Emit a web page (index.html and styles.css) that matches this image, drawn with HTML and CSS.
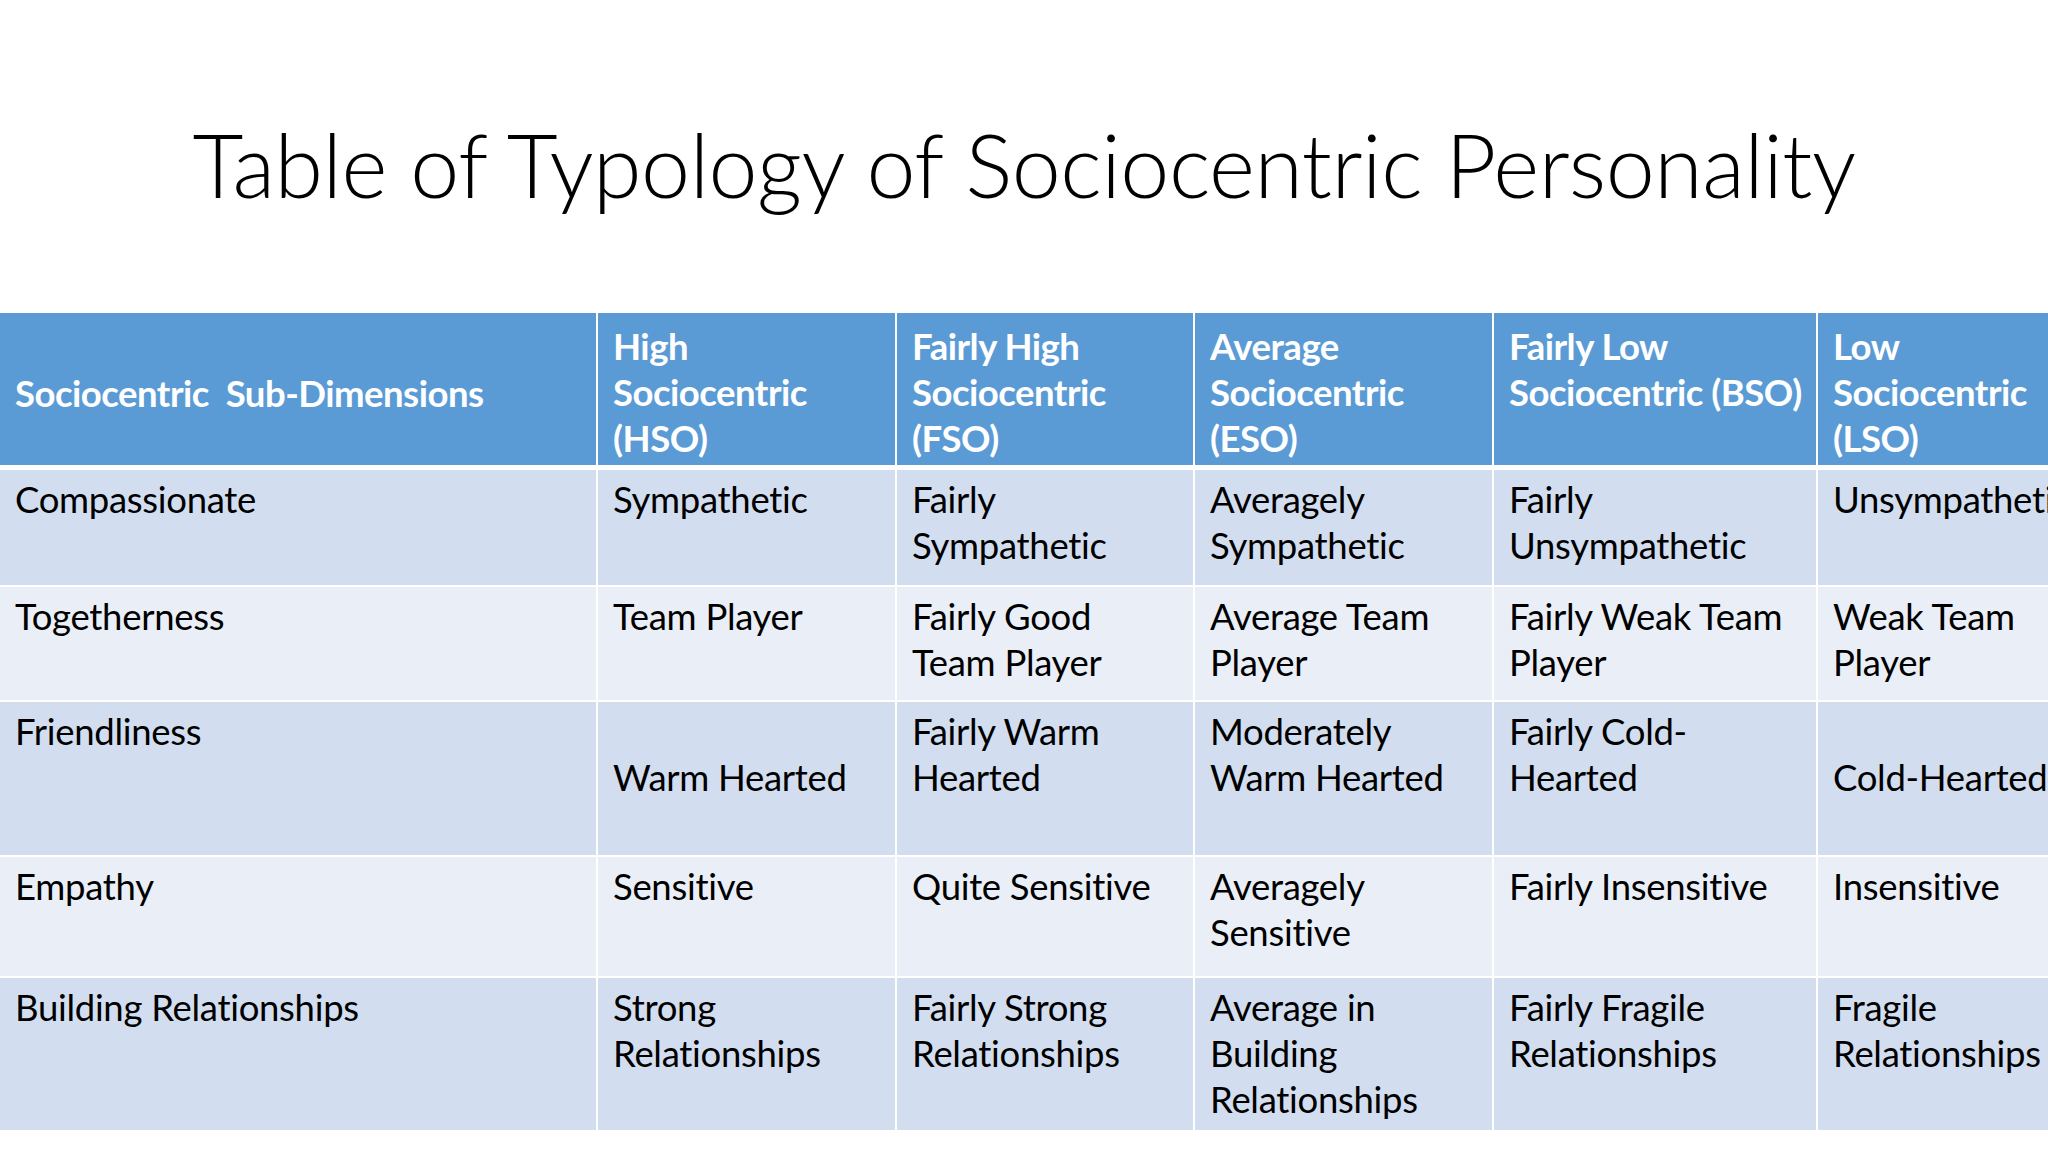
FILE: index.html
```html
<!DOCTYPE html>
<html lang="en">
<head>
<meta charset="utf-8">
<title>Table of Typology of Sociocentric Personality</title>
<link rel="stylesheet" href="styles.css">
</head>
<body>
<div class="slide">
  <h1 class="title">Table of Typology of Sociocentric Personality</h1>
  <div class="table-wrap">
    <table class="typology">
      <colgroup>
        <col class="c-dim">
        <col class="c-hso">
        <col class="c-fso">
        <col class="c-eso">
        <col class="c-bso">
        <col class="c-lso">
      </colgroup>
      <thead>
        <tr class="r-head">
          <th class="mid">Sociocentric&nbsp; Sub-Dimensions</th>
          <th>High<br>Sociocentric<br>(HSO)</th>
          <th>Fairly High<br>Sociocentric<br>(FSO)</th>
          <th>Average<br>Sociocentric<br>(ESO)</th>
          <th>Fairly Low<br>Sociocentric (BSO)</th>
          <th>Low<br>Sociocentric<br>(LSO)</th>
        </tr>
      </thead>
      <tbody>
        <tr class="r1 band">
          <td>Compassionate</td>
          <td>Sympathetic</td>
          <td>Fairly<br>Sympathetic</td>
          <td>Averagely<br>Sympathetic</td>
          <td>Fairly<br>Unsympathetic</td>
          <td>Unsympathetic</td>
        </tr>
        <tr class="r2">
          <td>Togetherness</td>
          <td>Team Player</td>
          <td>Fairly Good<br>Team Player</td>
          <td>Average Team<br>Player</td>
          <td>Fairly Weak Team<br>Player</td>
          <td>Weak Team<br>Player</td>
        </tr>
        <tr class="r3 band">
          <td>Friendliness</td>
          <td><span class="blank"></span>Warm Hearted</td>
          <td>Fairly Warm<br>Hearted</td>
          <td>Moderately<br>Warm Hearted</td>
          <td>Fairly Cold-<br>Hearted</td>
          <td><span class="blank"></span>Cold-Hearted</td>
        </tr>
        <tr class="r4">
          <td>Empathy</td>
          <td>Sensitive</td>
          <td>Quite Sensitive</td>
          <td>Averagely<br>Sensitive</td>
          <td>Fairly Insensitive</td>
          <td>Insensitive</td>
        </tr>
        <tr class="r5 band">
          <td>Building Relationships</td>
          <td>Strong<br>Relationships</td>
          <td>Fairly Strong<br>Relationships</td>
          <td>Average in<br>Building<br>Relationships</td>
          <td>Fairly Fragile<br>Relationships</td>
          <td>Fragile<br>Relationships</td>
        </tr>
      </tbody>
    </table>
  </div>
</div>
</body>
</html>
```

FILE: styles.css
```css
html, body {
  margin: 0;
  padding: 0;
  background: #ffffff;
}

.slide {
  width: 2048px;
  height: 1152px;
  overflow: hidden;
  background: #ffffff;
  font-family: "Lato", "Open Sans", sans-serif;
  color: #000000;
}

.title {
  margin: 0;
  padding-top: 120px;
  height: 313px;
  box-sizing: border-box;
  text-align: center;
  font-weight: 300;
  font-size: 88px;
  line-height: 1;
  letter-spacing: -0.5px;
  color: #000000;
}

.table-wrap {
  width: 2048px;
  overflow: hidden;
}

.typology {
  border-collapse: collapse;
  table-layout: fixed;
  width: 2140px;
  font-size: 36.5px;
  line-height: 46px;
  letter-spacing: -0.3px;
}

.c-dim { width: 597px; }
.c-hso { width: 299px; }
.c-fso { width: 298px; }
.c-eso { width: 299px; }
.c-bso { width: 324px; }
.c-lso { width: 323px; }

.typology th,
.typology td {
  padding: 6px 8px 2px 15px;
  vertical-align: top;
  text-align: left;
  white-space: nowrap;
  overflow: hidden;
  border: 2px solid #ffffff;
}

.typology th {
  padding-top: 10px;
  background: #5b9bd5;
  color: #ffffff;
  font-weight: 700;
  letter-spacing: -0.5px;
  border-bottom: 5px solid #ffffff;
  border-top: 0;
}

.typology th.mid {
  vertical-align: middle;
}

.typology td {
  background: #eaeff7;
}

.typology tr.band td {
  background: #d2deef;
}

.typology tr > :first-child {
  border-left: 0;
}

.blank {
  display: block;
  height: 46px;
}

.r-head { height: 154px; }
.r1 { height: 119px; }
.r2 { height: 115px; }
.r3 { height: 155px; }
.r4 { height: 121px; }
.r5 { height: 154px; }
```
